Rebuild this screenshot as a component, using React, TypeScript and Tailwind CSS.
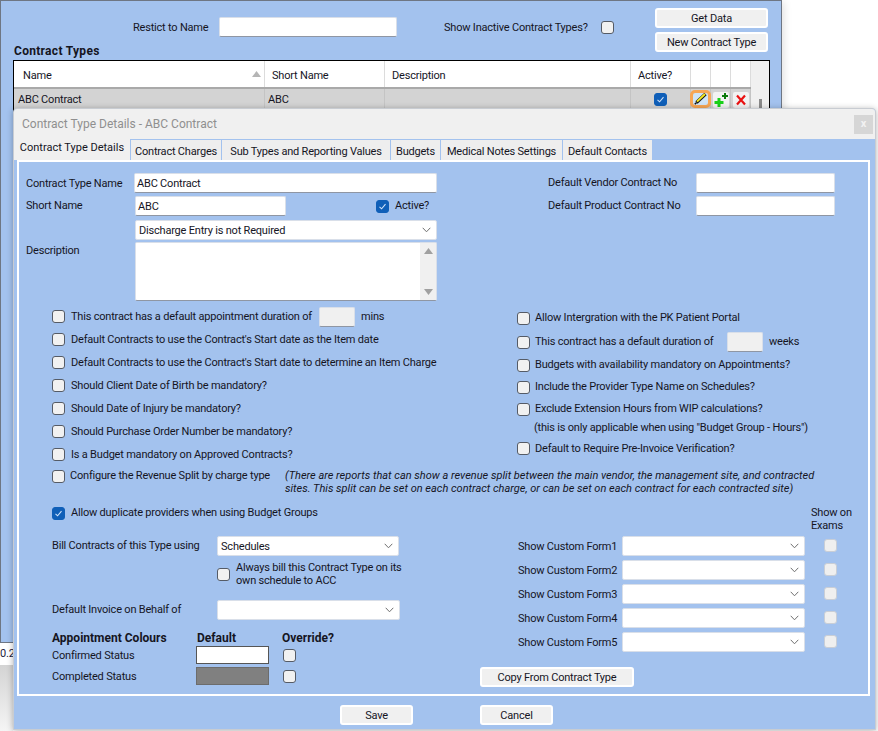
const Check = ({ checked = false, faint = false }: { checked?: boolean; faint?: boolean }) => (
  <span
    className={`flex h-[13px] w-[13px] shrink-0 items-center justify-center rounded-[3px] border ${
      checked ? 'border-[#0f5fb8] bg-[#0f5fb8]' : faint ? 'border-[#c9ced6] bg-[#efefef]' : 'border-[#555b66] bg-[#f1f1f1]'
    }`}
  >
    {checked && (
      <svg width="9" height="9" viewBox="0 0 9 9" fill="none">
        <path d="M1.5 4.8 3.6 6.8 7.5 2.2" stroke="#cfe2fa" strokeWidth="1.1" />
      </svg>
    )}
  </span>
);

const Input = ({ className, value = '' }: { className: string; value?: string }) => (
  <div className={`flex items-center rounded-[2px] border border-[#d9dfe9] border-b-[#8f96a3] bg-white pl-[2px] pt-[2px] ${className}`}>{value}</div>
);

const Select = ({ className, value = '' }: { className: string; value?: string }) => (
  <div className={`flex items-center justify-between rounded-[2px] border border-[#d9dfe9] bg-white pl-[3px] pr-[5px] ${className}`}>
    <span className="mt-[2px]">{value}</span>
    <svg width="9" height="6" viewBox="0 0 9 6" fill="none">
      <path d="M.7.8 4.5 4.8 8.3.8" stroke="#6f6f6f" strokeWidth="1" />
    </svg>
  </div>
);

const Button = ({ label, className }: { label: string; className: string }) => (
  <div className={`flex items-center justify-center rounded-[3px] border-2 border-white bg-[#f0f0f0] pt-[2px] ${className}`}>{label}</div>
);

const CheckRow = ({ label, className = 'h-[23px] gap-[6px]' }: { label: string; className?: string }) => (
  <div className={`flex items-center ${className}`}>
    <Check />
    <span>{label}</span>
  </div>
);

const IconCell = ({ children, active = false }: { children: React.ReactNode; active?: boolean }) => (
  <div className="flex w-[20px] items-center justify-center border-r border-[#c4c4c4]">
    <div className={`flex items-center justify-center rounded-[2px] ${active ? 'mb-[3px] h-[12px] w-[15px] bg-[#cfe4f7] outline-[3px] outline-[#f7a654]' : 'h-[16px] w-[16px] bg-[#f2f2f2]'}`}>
      {children}
    </div>
  </div>
);

const leftChecks = [
  'Default Contracts to use the Contract\'s Start date as the Item date',
  'Default Contracts to use the Contract\'s Start date to determine an Item Charge',
  'Should Client Date of Birth be mandatory?',
  'Should Date of Injury be mandatory?',
  'Should Purchase Order Number be mandatory?',
  'Is a Budget mandatory on Approved Contracts?',
];

const tabs = [
  ['Contract Charges', 'w-[90px]'],
  ['Sub Types and Reporting Values', 'w-[168px]'],
  ['Budgets', 'w-[49px]'],
  ['Medical Notes Settings', 'w-[121px]'],
  ['Default Contacts', 'w-[89px]'],
];

export default function App() {
  return (
    <div className="relative h-[731px] w-[878px] overflow-hidden whitespace-nowrap bg-white font-[Roboto,sans-serif] text-[11px] leading-[16px] tracking-[-0.2px] text-[#15151f]">
      <div className="h-[643px] w-[782px] overflow-hidden border border-[#6e7683] bg-[#a3c2ee] shadow-[2px_2px_8px_rgba(0,0,0,0.12)]">
        <div className="flex h-[49px] pt-[7px]">
          <div className="ml-[132px] mt-[9px] flex h-[20px] items-center">
            <span className="mt-[2px] w-[85px]">Restict to Name</span>
            <Input className="ml-[1px] h-[20px] w-[178px]" />
          </div>
          <div className="ml-[47px] mt-[9px] flex h-[20px] w-[170px] items-center justify-between">
            <span className="mt-[2px]">Show Inactive Contract Types?</span>
            <Check />
          </div>
          <div className="ml-[41px] flex flex-col gap-[4px]">
            <Button label="Get Data" className="h-[20px] w-[113px]" />
            <Button label="New Contract Type" className="h-[20px] w-[113px]" />
          </div>
        </div>
        <div className="ml-[13px] h-[10px] text-[12px] font-bold leading-[2px] tracking-[0.3px]">Contract Types</div>
        <div className="ml-[12px] w-[757px] border border-black bg-[#f0f0f0]">
          <div className="flex">
            <div className="w-[737px]">
              <div className="flex h-[28px] border-b-2 border-[#a9a9a9] bg-white">
                <div className="flex w-[251px] items-center justify-between border-r border-[#dcdcdc] pl-[9px] pr-[3px]">
                  <span className="mt-[4px]">Name</span>
                  <svg width="9" height="6" viewBox="0 0 9 6">
                    <path d="M4.5 0 9 6H0z" fill="#b5b5b5" />
                  </svg>
                </div>
                <div className="flex w-[120px] items-center border-r border-[#dcdcdc] pl-[7px] pt-[4px]">Short Name</div>
                <div className="flex w-[246px] items-center border-r border-[#dcdcdc] pl-[7px] pt-[4px]">Description</div>
                <div className="flex w-[60px] items-center border-r border-[#dcdcdc] pl-[7px] pt-[4px]">Active?</div>
                <div className="w-[20px] border-r border-[#dcdcdc]" />
                <div className="w-[20px] border-r border-[#dcdcdc]" />
                <div className="w-[20px] border-r border-[#dcdcdc]" />
              </div>
              <div className="flex h-[22px] bg-[#d3d3d3]">
                <div className="flex w-[251px] items-center border-r border-[#c4c4c4] pl-[4px]">ABC Contract</div>
                <div className="flex w-[120px] items-center border-r border-[#c4c4c4] pl-[3px]">ABC</div>
                <div className="w-[246px] border-r border-[#c4c4c4]" />
                <div className="flex w-[60px] items-center justify-center border-r border-[#c4c4c4] pb-[2px]">
                  <Check checked />
                </div>
                <IconCell active>
                  <svg width="13" height="13" viewBox="0 0 13 13" fill="none">
                    <path d="M2.5 10.5 11.5 2" stroke="#111" strokeWidth="3.2" />
                    <path d="M3 9.6 11 2" stroke="#f7ea1f" strokeWidth="2" />
                    <path d="M.8 12.2 2.6 10.5" stroke="#111" strokeWidth="1.5" />
                  </svg>
                </IconCell>
                <IconCell>
                  <svg width="16" height="16" viewBox="0 0 16 16">
                    <path d="M4.5 6h3v3h3v3h-3v3h-3v-3h-3V9h3z" fill="#19d119" />
                    <path d="M11 1h2v2h2v2h-2v2h-2V5H9V3h2z" fill="#0b7a0b" />
                  </svg>
                </IconCell>
                <IconCell>
                  <svg width="12" height="12" viewBox="0 0 12 12" fill="none">
                    <path d="M2 1.5 10 10.5M10 1.5 2 10.5" stroke="#ea1111" strokeWidth="2.2" />
                  </svg>
                </IconCell>
              </div>
            </div>
            <div className="flex w-[18px] justify-center pt-[38px]">
              <div className="h-[40px] w-[3px] bg-[#8a8a8a]" />
            </div>
          </div>
          <div className="h-[540px]" />
        </div>
      </div>
      <div className="h-[22px] w-[13px] overflow-hidden bg-white pt-[3px] text-[#1d2440]">0.2</div>
      <div className="h-[66px] w-[13px] bg-gradient-to-b from-[#d4d4d4] to-[#f5f5f5]" />

      <div className="absolute left-[13px] top-[108px] flex h-[622px] w-[863px] flex-col overflow-hidden rounded-t-[4px] border border-[#c8ccd2] bg-[#a3c2ee] shadow-[0_1px_6px_rgba(0,0,0,0.3)]">
        <div className="flex h-[30px] shrink-0 items-center justify-between bg-[#f0f0f0] pl-[8px] pr-[2px] text-[12px] tracking-normal text-[#8f8f8f]">
          <span>Contract Type Details - ABC Contract</span>
          <div className="flex h-[19px] w-[19px] items-center justify-center bg-[#d6d6d6] text-[11px] font-bold text-[#f2f2f2]">x</div>
        </div>
        <div className="flex h-[21px] shrink-0 items-end">
          <div className="flex h-[21px] w-[116px] items-center justify-center bg-[#f0f0f0] pb-[3px] tracking-[0px]">Contract Type Details</div>
          {tabs.map(([label, width]) => (
            <div key={label} className={`ml-[1px] flex h-[20px] items-center justify-center bg-[#eeeeee] pt-[4px] ${width}`}>
              {label}
            </div>
          ))}
        </div>
        <div className="ml-[3px] h-[536px] w-[853px] border-2 border-white px-[7px]">
          <div className="flex h-[142px] pt-[11px]">
            <div className="w-[411px]">
              <div className="flex h-[20px] items-center justify-between">
                <span className="mt-[2px]">Contract Type Name</span>
                <Input className="h-[20px] w-[303px]" value="ABC Contract" />
              </div>
              <div className="mt-[3px] flex h-[20px] items-center">
                <span className="w-[109px]">Short Name</span>
                <Input className="h-[20px] w-[151px]" value="ABC" />
                <span className="ml-[90px] flex items-center gap-[6px]">
                  <Check checked />
                  Active?
                </span>
              </div>
              <Select className="ml-[109px] mt-[4px] h-[20px] w-[302px]" value="Discharge Entry is not Required" />
              <div className="mt-[2px] flex">
                <span className="mt-[1px] w-[109px]">Description</span>
                <div className="flex h-[59px] w-[302px] justify-end rounded-[2px] border border-[#d9dfe9] border-b-[#8f96a3] bg-white">
                  <div className="flex w-[16px] flex-col items-center justify-between bg-[#f0f0f0] py-[5px]">
                    <svg width="9" height="6" viewBox="0 0 9 6">
                      <path d="M4.5 0 9 6H0z" fill="#a0a0a0" />
                    </svg>
                    <svg width="9" height="6" viewBox="0 0 9 6">
                      <path d="M0 0h9L4.5 6z" fill="#a0a0a0" />
                    </svg>
                  </div>
                </div>
              </div>
            </div>
            <div className="ml-[111px]">
              <div className="flex h-[20px] items-center">
                <span className="w-[148px]">Default Vendor Contract No</span>
                <Input className="h-[20px] w-[139px]" />
              </div>
              <div className="mt-[3px] flex h-[20px] items-center">
                <span className="w-[148px]">Default Product Contract No</span>
                <Input className="h-[20px] w-[139px]" />
              </div>
            </div>
          </div>

          <div className="flex pl-[26px] pt-[1px]">
            <div className="w-[465px]">
              <div className="flex h-[23px] items-center">
                <Check />
                <span className="ml-[6px] w-[248px]">This contract has a default appointment duration of</span>
                <div className="h-[20px] w-[36px] rounded-[2px] border border-[#d9dfe9] border-b-[#8f96a3] bg-[#f0f0f0]" />
                <span className="ml-[6px]">mins</span>
              </div>
              {leftChecks.map((label) => (
                <CheckRow key={label} label={label} />
              ))}
            </div>
            <div className="pt-[1px]">
              <CheckRow label="Allow Intergration with the PK Patient Portal" className="h-[24px] gap-[5px]" />
              <div className="flex h-[24px] items-center">
                <Check />
                <span className="ml-[5px] w-[192px]">This contract has a default duration of</span>
                <div className="h-[20px] w-[36px] rounded-[2px] border border-[#d9dfe9] border-b-[#8f96a3] bg-[#f0f0f0]" />
                <span className="ml-[6px]">weeks</span>
              </div>
              <CheckRow label="Budgets with availability mandatory on Appointments?" className="h-[22px] gap-[5px]" />
              <CheckRow label="Include the Provider Type Name on Schedules?" className="h-[22px] gap-[5px]" />
              <CheckRow label="Exclude Extension Hours from WIP calculations?" className="h-[22px] gap-[5px]" />
              <div className="h-[17px] pl-[17px]">(this is only applicable when using "Budget Group - Hours")</div>
              <CheckRow label="Default to Require Pre-Invoice Verification?" className="h-[23px] gap-[5px]" />
            </div>
          </div>

          <div className="flex pl-[26px] pt-[2px]">
            <div className="flex h-[16px] w-[233px] items-center gap-[5px]">
              <Check />
              <span>Configure the Revenue Split by charge type</span>
            </div>
            <p className="mt-[1px] leading-[13px] tracking-normal italic">
              (There are reports that can show a revenue split between the main vendor, the management site, and contracted
              <br />
              sites. This split can be set on each contract charge, or can be set on each contract for each contracted site)
            </p>
          </div>

          <div className="ml-[26px] mt-[10px] flex items-center gap-[6px]">
            <Check checked />
            <span>Allow duplicate providers when using Budget Groups</span>
          </div>

          <div className="flex pl-[26px]">
            <div className="w-[466px] pt-[15px]">
              <div className="flex h-[20px] items-center">
                <span className="w-[165px]">Bill Contracts of this Type using</span>
                <Select className="h-[20px] w-[182px]" value="Schedules" />
              </div>
              <div className="ml-[165px] mt-[5px] flex items-center gap-[6px] leading-[13px]">
                <Check />
                <span>
                  Always bill this Contract Type on its
                  <br />
                  own schedule to ACC
                </span>
              </div>
              <div className="mt-[13px] flex h-[20px] items-center">
                <span className="w-[165px]">Default Invoice on Behalf of</span>
                <Select className="h-[20px] w-[183px]" />
              </div>
              <div className="mt-[10px] flex h-[16px] items-center text-[12px] font-bold tracking-normal">
                <span className="w-[145px]">Appointment Colours</span>
                <span className="w-[85px]">Default</span>
                <span>Override?</span>
              </div>
              <div className="flex h-[18px] items-center">
                <span className="mt-[1px] w-[144px]">Confirmed Status</span>
                <div className="h-[18px] w-[73px] border border-[#555] bg-white" />
                <span className="ml-[14px]"><Check /></span>
              </div>
              <div className="mt-[3px] flex h-[18px] items-center">
                <span className="mt-[1px] w-[144px]">Completed Status</span>
                <div className="h-[18px] w-[73px] border border-[#6c6c6c] bg-[#808080]" />
                <span className="ml-[14px]"><Check /></span>
              </div>
            </div>
            <div className="w-[330px]">
              <div className="-mt-[15px] ml-[293px] leading-[13px]">
                Show on
                <br />
                Exams
              </div>
              <div className="mt-[4px] flex flex-col gap-[4px]">
                {[1, 2, 3, 4, 5].map((n) => (
                  <div key={n} className="flex h-[20px] items-center">
                    <span className="mt-[2px] w-[99px] text-right">Show Custom Form{n}</span>
                    <Select className="ml-[5px] h-[20px] w-[183px]" />
                    <span className="ml-[19px] pb-[2px]"><Check faint /></span>
                  </div>
                ))}
              </div>
              <Button label="Copy From Contract Type" className="-ml-[38px] mt-[15px] h-[20px] w-[154px]" />
            </div>
          </div>
        </div>
        <div className="flex flex-1 items-center pl-[326px] pt-[5px]">
          <Button label="Save" className="h-[20px] w-[73px]" />
          <Button label="Cancel" className="ml-[67px] h-[20px] w-[73px]" />
        </div>
      </div>
    </div>
  );
}
